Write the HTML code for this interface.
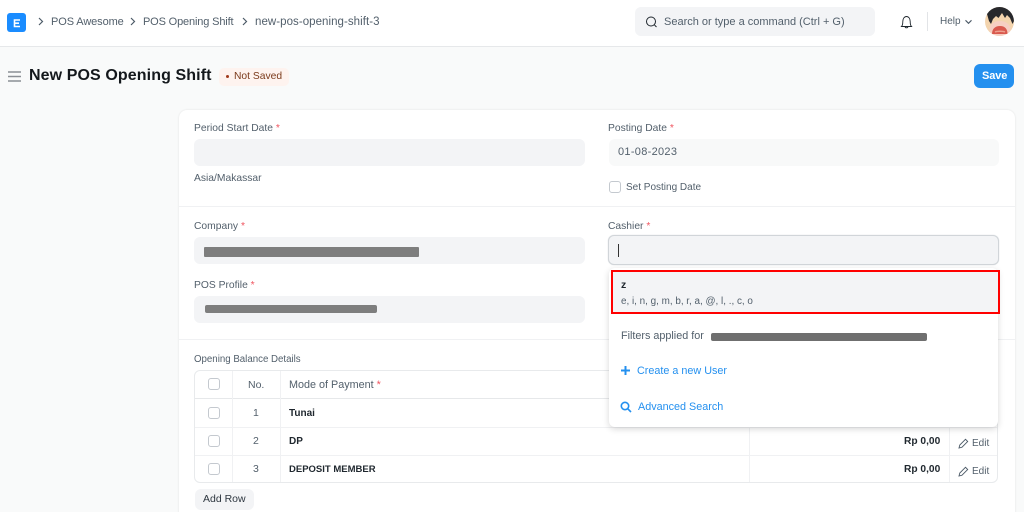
<!DOCTYPE html>
<html><head><meta charset="utf-8"><style>
html,body{margin:0;padding:0;width:1024px;height:512px;overflow:hidden;background:#f9fafa;font-family:"Liberation Sans",sans-serif;}
#w{position:absolute;left:0;top:0;width:1024px;height:512px;overflow:hidden;background:#f9fafa}
.a{position:absolute}
.t{position:absolute;white-space:nowrap;font-size:10.300px;line-height:14px;color:#525f6b;letter-spacing:0}
.r{color:#f0545f}
.i{position:absolute;background:#f3f4f6;border-radius:6px}
.c{position:absolute;width:10px;height:10px;border:1px solid #c4c9cf;border-radius:3px;background:#fff}
.l{position:absolute;background:#f0f1f3}
.b{font-weight:bold;color:#1f272e}
</style></head><body><div id="w">
<div class="a" style="left:0;top:0;width:1024px;height:46px;background:#fff;border-bottom:1px solid #e6e8ea"></div>
<div class="a" style="left:7px;top:13px;width:19px;height:19px;background:#1a8cff;border-radius:3px"></div>
<svg class="a" style="left:7px;top:13px" width="19" height="19"><path d="M13 7H7.500v6.500H13M7.500 10.200h4.500" fill="none" stroke="#fff" stroke-width="1.600"/></svg>
<svg class="a" style="left:36px;top:16px" width="220" height="12" fill="none" stroke="#4c5a67" stroke-width="1.200"><path d="M3 2l3.500 3.500L3 9M95 2l3.500 3.500L95 9M207 2l3.500 3.500L207 9"/></svg>
<span class="t" style="left:51px;top:15px;font-size:11px;letter-spacing:-.1px">POS Awesome</span>
<span class="t" style="left:143px;top:15px;font-size:11px;letter-spacing:-.15px">POS Opening Shift</span>
<span class="t" style="left:255px;top:15px;font-size:11.500px;letter-spacing:.05px">new-pos-opening-shift-3</span>
<div class="i" style="left:635px;top:7px;width:240px;height:29px"></div>
<svg class="a" style="left:645px;top:15px" width="14" height="14" fill="none" stroke="#1f272e" stroke-width="1"><circle cx="6" cy="6.500" r="4.500"/><path d="M9.500 10l2 2"/></svg>
<span class="t" style="left:664px;top:15px;font-size:11px">Search or type a command (Ctrl + G)</span>
<svg class="a" style="left:898px;top:13px" width="17" height="17" fill="none" stroke="#1f272e" stroke-width=".9"><path d="M3.500 13.500c1.200-1.200 1.300-2.500 1.300-5 0-2.500 1.300-5 3.700-5s3.700 2.500 3.700 5c0 2.500.1 3.800 1.300 5zM7 13.500c.3 1.800 2.700 1.800 3 0"/></svg>
<div class="a" style="left:927px;top:12px;width:1px;height:19px;background:#e2e4e7"></div>
<span class="t" style="left:940px;top:15px;font-size:10px">Help</span>
<svg class="a" style="left:964px;top:19px" width="9" height="6" fill="none" stroke="#4c5a67" stroke-width="1.100"><path d="M1.500 1.300l3 3 3-3"/></svg>
<svg class="a" style="left:985px;top:7px" width="29" height="29"><defs><clipPath id="av"><circle cx="14.500" cy="14.500" r="14.500"/></clipPath></defs><g clip-path="url(#av)"><rect width="29" height="29" fill="#f3d4ae"/><path d="M0 0h29v14l-1.500 3-2.500-6-3-3-2 3-3-5-3.500 5-2.500-2-3 3-2 5-2-3z" fill="#27282c"/><ellipse cx="15" cy="22" rx="10.500" ry="8" fill="#f6cfc3"/><path d="M7 27c0-5 3-8 8-8s7.500 3 7.500 8z" fill="#d9594e"/><path d="M10 25c2-1 8-1 10 0" stroke="#eda08f" stroke-width="1.500" fill="none"/></g></svg>

<svg class="a" style="left:8px;top:71px" width="13" height="11" stroke="#8b8f95" stroke-width="1.600"><path d="M0 1h13M0 5.500h13M0 10h13"/></svg>
<span class="t b" style="left:29px;top:66px;font-size:16px;line-height:20px;letter-spacing:.1px;color:#14181c">New POS Opening Shift</span>
<div class="a" style="left:219px;top:68px;width:70px;height:18px;background:#fef3ef;border-radius:5px"></div>
<div class="a" style="left:226px;top:75px;width:3px;height:3px;background:#a03a1c;border-radius:50%"></div>
<span class="t" style="left:234px;top:70px;font-size:10.300px;color:#7b3a1b">Not Saved</span>
<div class="a" style="left:974px;top:64px;width:40px;height:24px;background:#2490ef;border-radius:6px"></div>
<span class="t" style="left:982px;top:69px;font-size:11px;color:#fff;font-weight:bold;letter-spacing:-.1px">Save</span>

<div class="a" style="left:179px;top:110px;width:836px;height:420px;background:#fff;border-radius:8px;box-shadow:0 0 2px rgba(0,0,0,.1)"></div>
<div class="l" style="left:179px;top:206px;width:836px;height:1px"></div>
<div class="l" style="left:179px;top:339px;width:836px;height:1px"></div>

<span class="t" style="left:194px;top:122px">Period Start Date <span class="r">*</span></span>
<div class="i" style="left:194px;top:139px;width:391px;height:27px"></div>
<span class="t" style="left:194px;top:172px">Asia/Makassar</span>

<span class="t" style="left:608px;top:122px">Posting Date <span class="r">*</span></span>
<div class="i" style="left:609px;top:139px;width:390px;height:27px;background:#f8f9f9"></div>
<span class="t" style="left:618px;top:145px;font-size:11px;letter-spacing:.3px">01-08-2023</span>
<div class="c" style="left:609px;top:181px"></div>
<span class="t" style="left:626px;top:181px;font-size:10px">Set Posting Date</span>

<span class="t" style="left:194px;top:220px">Company <span class="r">*</span></span>
<div class="i" style="left:194px;top:237px;width:391px;height:27px"></div>
<div class="a" style="left:204px;top:247px;width:215px;height:10px;background:#7e7e7e;border-radius:1px"></div>
<span class="t" style="left:194px;top:279px">POS Profile <span class="r">*</span></span>
<div class="i" style="left:194px;top:296px;width:391px;height:27px"></div>
<div class="a" style="left:205px;top:305px;width:172px;height:8px;background:#7e7e7e;border-radius:2px"></div>

<span class="t" style="left:608px;top:220px">Cashier <span class="r">*</span></span>
<div class="i" style="left:608px;top:235px;width:389px;height:28px;border:1px solid #d1d5d9;box-shadow:0 0 1px #d1d5d9"></div>
<div class="a" style="left:618px;top:244px;width:1px;height:13px;background:#333"></div>

<span class="t" style="left:194px;top:353px;font-size:9.700px">Opening Balance Details</span>
<div class="a" style="left:194px;top:370px;width:802px;height:111px;border:1px solid #e8eaec;border-radius:6px"></div>
<div class="l" style="left:195px;top:398px;width:802px;height:1px;background:#e6e8ea"></div>
<div class="l" style="left:195px;top:427px;width:802px;height:1px"></div>
<div class="l" style="left:195px;top:455px;width:802px;height:1px"></div>
<div class="l" style="left:232px;top:371px;width:1px;height:111px"></div>
<div class="l" style="left:280px;top:371px;width:1px;height:111px"></div>
<div class="l" style="left:749px;top:371px;width:1px;height:111px"></div>
<div class="l" style="left:949px;top:371px;width:1px;height:111px"></div>
<div class="c" style="left:208px;top:378px"></div>
<div class="c" style="left:208px;top:407px"></div>
<div class="c" style="left:208px;top:435px"></div>
<div class="c" style="left:208px;top:463px"></div>
<span class="t" style="left:248px;top:378px;font-size:10.500px">No.</span>
<span class="t" style="left:289px;top:378px;font-size:10.800px">Mode of Payment <span class="r">*</span></span>
<span class="t" style="left:253px;top:406px;font-size:10.500px">1</span>
<span class="t" style="left:253px;top:434px;font-size:10.500px">2</span>
<span class="t" style="left:253px;top:462px;font-size:10.500px">3</span>
<span class="t b" style="left:289px;top:407px;font-size:10px">Tunai</span>
<span class="t b" style="left:289px;top:435px;font-size:10px">DP</span>
<span class="t b" style="left:289px;top:463px;font-size:9.500px">DEPOSIT MEMBER</span>
<span class="t b" style="left:904px;top:435px;font-size:10.200px">Rp 0,00</span>
<span class="t b" style="left:904px;top:463px;font-size:10.200px">Rp 0,00</span>
<svg class="a" style="left:958px;top:438px" width="11" height="11" fill="none" stroke="#4c5a67" stroke-width=".9"><path d="M1 10l.8-3L7.500 1.300l2.200 2.200L4 9.200z"/></svg>
<span class="t" style="left:972px;top:437px;font-size:10px">Edit</span>
<svg class="a" style="left:958px;top:466px" width="11" height="11" fill="none" stroke="#4c5a67" stroke-width=".9"><path d="M1 10l.8-3L7.500 1.300l2.200 2.200L4 9.200z"/></svg>
<span class="t" style="left:972px;top:465px;font-size:10px">Edit</span>
<div class="i" style="left:195px;top:489px;width:59px;height:21px"></div>
<span class="t" style="left:203px;top:492px;font-size:10.500px;color:#2e3740">Add Row</span>

<div class="a" style="left:609px;top:268px;width:389px;height:159px;background:#fff;border-radius:6px;box-shadow:0 2px 7px rgba(0,0,0,.16)"></div>
<div class="a" style="left:611px;top:270px;width:389px;height:44px;box-sizing:border-box;border:2px solid #f00;background:#f3f4f6"></div>
<span class="t b" style="left:621px;top:278px;font-size:10.500px">z</span>
<span class="t" style="left:621px;top:295px;font-size:9.900px">e, i, n, g, m, b, r, a, @, l, ., c, o</span>
<span class="t" style="left:621px;top:329px;font-size:10.800px">Filters applied for</span>
<div class="a" style="left:711px;top:333px;width:216px;height:8px;background:#6f6f6f;border-radius:2px"></div>
<svg class="a" style="left:621px;top:366px" width="9" height="9" stroke="#2490ef" stroke-width="2"><path d="M4.500 0v9M0 4.500h9"/></svg>
<span class="t" style="left:637px;top:364px;font-size:10.800px;color:#2490ef">Create a new User</span>
<svg class="a" style="left:620px;top:401px" width="12" height="12" fill="none" stroke="#2490ef" stroke-width="1.600"><circle cx="5" cy="5" r="3.700"/><path d="M7.800 7.800l3.200 3.200"/></svg>
<span class="t" style="left:638px;top:400px;font-size:10.800px;color:#2490ef">Advanced Search</span>
</div></body></html>
